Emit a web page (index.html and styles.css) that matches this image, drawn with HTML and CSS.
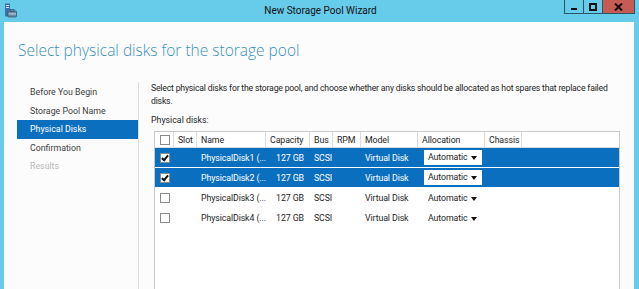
FILE: index.html
```html
<!DOCTYPE html>
<html>
<head>
<meta charset="utf-8">
<link rel="stylesheet" href="styles.css">
</head>
<body>
<div class="window">
  <div class="titlebar">
    <div class="tb-left">
      <svg class="app-icon" width="13" height="15" viewBox="0 0 13 15">
        <rect x="1" y="0.5" width="5" height="13" fill="#3d6fa8"/>
        <rect x="2" y="2" width="3" height="1" fill="#cfe3f5"/>
        <rect x="2" y="4" width="3" height="1" fill="#cfe3f5"/>
        <rect x="4" y="8" width="8.5" height="6" rx="1" fill="#6a89a8" stroke="#3b5670" stroke-width="0.8"/>
        <rect x="6.5" y="6.5" width="3.5" height="2" fill="none" stroke="#3b5670" stroke-width="0.8"/>
        <rect x="4.5" y="10.5" width="7.5" height="0.8" fill="#dfe9f2"/>
      </svg>
    </div>
    <div class="tb-title">New Storage Pool Wizard</div>
    <div class="tb-controls">
      <div class="ctl ctl-min"><span class="min-bar"></span></div>
      <div class="ctl ctl-max"><span class="max-box"></span></div>
      <div class="ctl ctl-close">
        <svg width="9" height="8" viewBox="0 0 9 8"><path d="M1 0.5 L8 7.5 M8 0.5 L1 7.5" stroke="#111" stroke-width="2"/></svg>
      </div>
    </div>
  </div>
  <div class="client">
    <h1 class="heading">Select physical disks for the storage pool</h1>
    <div class="body">
      <nav class="nav">
        <div class="nav-item">Before You Begin</div>
        <div class="nav-item">Storage Pool Name</div>
        <div class="nav-item active">Physical Disks</div>
        <div class="nav-item">Confirmation</div>
        <div class="nav-item disabled">Results</div>
      </nav>
      <main class="main">
        <p class="desc">Select physical disks for the storage pool, and choose whether any disks should be allocated as hot spares that replace failed<br>disks.</p>
        <div class="label">Physical disks:</div>
        <div class="grid">
          <table class="disks">
            <colgroup>
              <col class="c-chk"><col class="c-slot"><col class="c-name"><col class="c-cap"><col class="c-bus"><col class="c-rpm"><col class="c-model"><col class="c-alloc"><col class="c-chassis"><col>
            </colgroup>
            <thead>
              <tr>
                <th><span class="cb"></span></th>
                <th>Slot</th><th>Name</th><th>Capacity</th><th>Bus</th><th>RPM</th><th>Model</th><th>Allocation</th><th>Chassis</th><th class="last"></th>
              </tr>
            </thead>
            <tbody>
              <tr class="sel">
                <td><span class="cb checked"></span></td><td></td><td>PhysicalDisk1 (...</td><td class="num">127 GB</td><td>SCSI</td><td></td><td>Virtual Disk</td>
                <td><div class="dd boxed">Automatic<span class="arrow"></span></div></td><td></td><td></td>
              </tr>
              <tr class="sel">
                <td><span class="cb checked"></span></td><td></td><td>PhysicalDisk2 (...</td><td class="num">127 GB</td><td>SCSI</td><td></td><td>Virtual Disk</td>
                <td><div class="dd boxed">Automatic<span class="arrow"></span></div></td><td></td><td></td>
              </tr>
              <tr>
                <td><span class="cb"></span></td><td></td><td>PhysicalDisk3 (...</td><td class="num">127 GB</td><td>SCSI</td><td></td><td>Virtual Disk</td>
                <td><div class="dd">Automatic<span class="arrow"></span></div></td><td></td><td></td>
              </tr>
              <tr>
                <td><span class="cb"></span></td><td></td><td>PhysicalDisk4 (...</td><td class="num">127 GB</td><td>SCSI</td><td></td><td>Virtual Disk</td>
                <td><div class="dd">Automatic<span class="arrow"></span></div></td><td></td><td></td>
              </tr>
            </tbody>
          </table>
        </div>
      </main>
    </div>
  </div>
</div>
</body>
</html>
```

FILE: styles.css
```css
html, body {
  margin: 0;
  padding: 0;
  height: 100%;
  overflow: hidden;
}
body {
  background: #67cbea;
  font-family: Roboto, "Noto Sans", sans-serif;
  color: #1e1e1e;
}
.window {
  display: flex;
  flex-direction: column;
  height: 289px;
  width: 639px;
}
.titlebar {
  height: 22px;
  display: grid;
  grid-template-columns: 1fr auto 1fr;
  align-items: start;
  flex: none;
}
.tb-left {
  padding: 3px 0 0 4px;
  display: flex;
}
.tb-title {
  font-size: 10px;
  line-height: 22px;
  color: #111;
  padding-left: 2px;
}
.tb-controls {
  display: flex;
  justify-content: flex-end;
  padding-right: 4px;
}
.ctl {
  height: 14px;
  border: 1px solid #2b5566;
  border-top: none;
  box-sizing: border-box;
  display: flex;
  align-items: center;
  justify-content: center;
}
.ctl-min { width: 20px; }
.ctl-max { width: 19px; border-left: none; }
.ctl-close { width: 32px; border-left: none; background: #c75a52; }
.min-bar {
  width: 6px;
  height: 2px;
  background: #111;
  margin-top: 5px;
}
.max-box {
  width: 4px;
  height: 4px;
  border: 2px solid #111;
}
.client {
  flex: 1;
  margin: 0 5px 0 4px;
  background: #fcfcfc;
  display: flex;
  flex-direction: column;
  min-height: 0;
}
.heading {
  margin: 17px 0 0 14px;
  font-family: "Open Sans", "Noto Sans", sans-serif;
  font-weight: 300;
  font-size: 15.5px;
  line-height: 22px;
  color: #3a8fbe;
  flex: none;
}
.body {
  flex: 1;
  display: flex;
  margin-top: 21px;
  min-height: 0;
}
.nav {
  width: 121px;
  margin-left: 13px;
  border-right: 1px solid #dcdcdc;
  padding-top: 1px;
  flex: none;
}
.nav-item {
  height: 18.5px;
  line-height: 18.5px;
  padding-left: 13px;
  font-size: 8.8px;
  color: #3c3c3c;
}
.nav-item.active {
  background: #0b6fbf;
  color: #fff;
}
.nav-item.disabled {
  color: #b8b8b8;
}
.main {
  flex: 1;
  padding-left: 12px;
  display: flex;
  flex-direction: column;
  min-height: 0;
}
.desc {
  margin: 0;
  font-size: 8.7px;
  line-height: 13px;
  letter-spacing: -0.2px;
  color: #1e1e1e;
  white-space: nowrap;
}
.label {
  margin-top: 6px;
  font-size: 8.8px;
  line-height: 13px;
}
.grid {
  flex: 1;
  margin: 4px 14px 0 3px;
  border: 1px solid #c9c9c9;
  border-bottom: none;
  background: #fff;
}
.disks {
  width: 100%;
  border-collapse: separate;
  border-spacing: 0;
  table-layout: fixed;
  font-size: 8.8px;
  letter-spacing: -0.1px;
}
.c-chk { width: 19px; }
.c-slot { width: 23px; }
.c-name { width: 69px; }
.c-cap { width: 44px; }
.c-bus { width: 23px; }
.c-rpm { width: 28px; }
.c-model { width: 57px; }
.c-alloc { width: 67px; }
.c-chassis { width: 37px; }
th {
  box-sizing: border-box;
  height: 16px;
  padding: 0 0 0 4px;
  text-align: left;
  font-weight: normal;
  border-right: 1px solid #dcdcdc;
  border-bottom: 1px solid #dcdcdc;
  color: #1e1e1e;
  white-space: nowrap;
}
th.last { border-right: none; }
td {
  box-sizing: border-box;
  height: 20px;
  padding: 0 0 0 4px;
  white-space: nowrap;
  overflow: visible;
  color: #1e1e1e;
}
th:first-child, td:first-child { padding-left: 5px; }
td.num { text-align: right; padding-right: 6px; }
tr.sel td {
  background: #0b6fbf;
  color: #fff;
  border-bottom: 1.5px solid #fff;
}
.cb {
  display: block;
  width: 8px;
  height: 8px;
  border: 1px solid #8a8a8a;
  background: #fff;
  position: relative;
}
.cb.checked::after {
  content: "";
  position: absolute;
  left: 2px;
  top: 0px;
  width: 2px;
  height: 5px;
  border: solid #111;
  border-width: 0 2px 2px 0;
  transform: rotate(40deg);
}
.dd {
  position: relative;
  margin-left: 2px;
  width: 58px;
  height: 15px;
  line-height: 15px;
  padding-left: 4px;
  box-sizing: border-box;
  color: #1e1e1e;
}
.dd.boxed {
  background: #fff;
}
.arrow {
  position: absolute;
  right: 5px;
  top: 6px;
  width: 0;
  height: 0;
  border-left: 3px solid transparent;
  border-right: 3px solid transparent;
  border-top: 4px solid #111;
}
```
